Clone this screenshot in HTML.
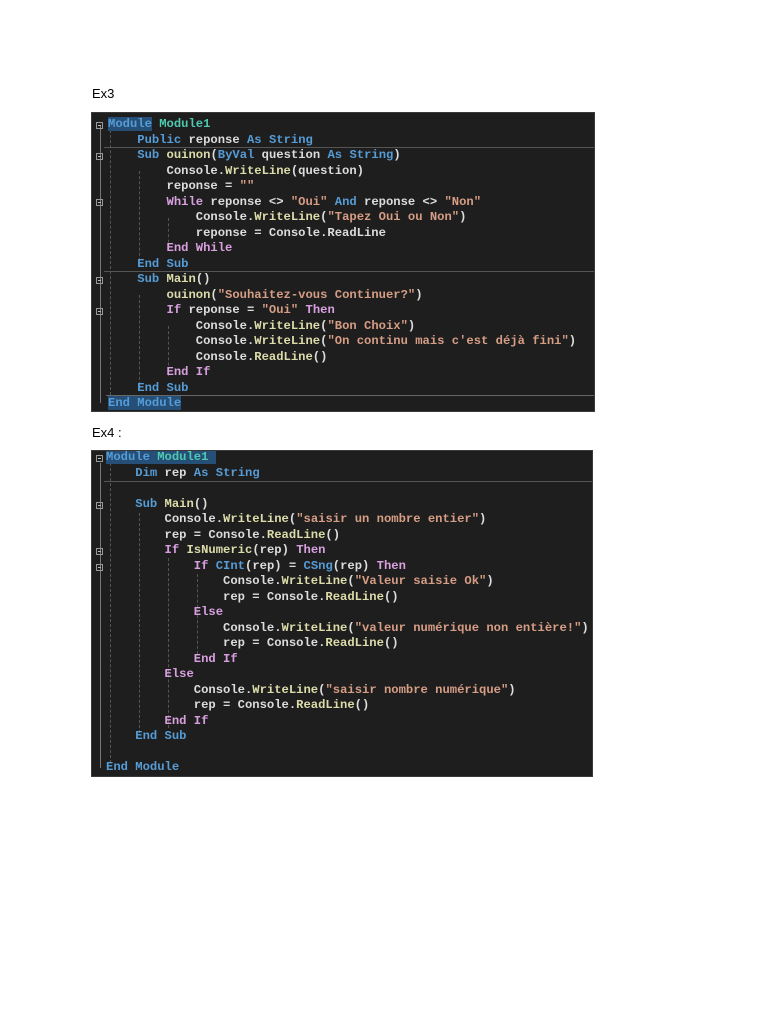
<!DOCTYPE html>
<html><head><meta charset="utf-8"><style>
body{margin:0;width:768px;height:1024px;background:#fff;position:relative;font-family:"Liberation Sans",sans-serif;}
.lbl{position:absolute;font-size:13px;color:#000;}
.box{position:absolute;background:#1e1e1e;border:1px solid #3a3a3a;box-sizing:border-box;overflow:hidden}
.ln{position:absolute;left:0;white-space:pre;font-family:"Liberation Mono",monospace;font-size:12.2px;font-weight:bold;color:#dcdcdc;line-height:15.5px;height:15.5px}
.k{color:#569cd6}.c{color:#d8a0df}.s{color:#d69d85}.t{color:#4ec9b0}.m{color:#dcdcaa}
.hl{background:#264f78}
.fold{position:absolute;left:4px;width:7px;height:7px;border:1px solid #999;box-sizing:border-box}
.fold:after{content:"";position:absolute;left:1px;top:2px;width:3px;height:1px;background:#bbb}
.vl{position:absolute;border-left:1px dashed #555;width:0}
.sep{position:absolute;left:12px;right:0;height:1px;background:#555}
</style></head><body>
<div class="lbl" style="left:92px;top:86px">Ex3</div>
<div class="box" style="left:91px;top:112px;width:504px;height:300px">
<div class="sep" style="top:34px"></div>
<div class="sep" style="top:158px"></div>
<div class="sep" style="top:282px;left:14px;background:#666"></div>
<div class="vl" style="left:8px;top:12px;height:278px;border-left:1px solid #777"></div>
<div class="vl" style="left:18px;top:12px;height:270px"></div>
<div class="vl" style="left:47px;top:58px;height:95px"></div>
<div class="vl" style="left:76px;top:105px;height:30px"></div>
<div class="vl" style="left:47px;top:182px;height:95px"></div>
<div class="vl" style="left:76px;top:213px;height:50px"></div>
<div class="fold" style="top:9px"></div>
<div class="fold" style="top:40px"></div>
<div class="fold" style="top:86px"></div>
<div class="fold" style="top:164px"></div>
<div class="fold" style="top:195px"></div>
<div style="position:absolute;left:16px;top:0">
<div class="ln" style="top:4px"><span class="k hl">Module</span> <span class="t">Module1</span></div>
<div class="ln" style="top:19.5px">    <span class="k">Public</span> reponse <span class="k">As</span> <span class="k">String</span></div>
<div class="ln" style="top:35px">    <span class="k">Sub</span> <span class="m">ouinon</span>(<span class="k">ByVal</span> question <span class="k">As</span> <span class="k">String</span>)</div>
<div class="ln" style="top:50.5px">        Console.<span class="m">WriteLine</span>(question)</div>
<div class="ln" style="top:66px">        reponse = <span class="s">""</span></div>
<div class="ln" style="top:81.5px">        <span class="c">While</span> reponse &lt;&gt; <span class="s">"Oui"</span> <span class="k">And</span> reponse &lt;&gt; <span class="s">"Non"</span></div>
<div class="ln" style="top:97px">            Console.<span class="m">WriteLine</span>(<span class="s">"Tapez Oui ou Non"</span>)</div>
<div class="ln" style="top:112.5px">            reponse = Console.ReadLine</div>
<div class="ln" style="top:128px">        <span class="c">End While</span></div>
<div class="ln" style="top:143.5px">    <span class="k">End Sub</span></div>
<div class="ln" style="top:159px">    <span class="k">Sub</span> <span class="m">Main</span>()</div>
<div class="ln" style="top:174.5px">        <span class="m">ouinon</span>(<span class="s">"Souhaitez-vous Continuer?"</span>)</div>
<div class="ln" style="top:190px">        <span class="c">If</span> reponse = <span class="s">"Oui"</span> <span class="c">Then</span></div>
<div class="ln" style="top:205.5px">            Console.<span class="m">WriteLine</span>(<span class="s">"Bon Choix"</span>)</div>
<div class="ln" style="top:221px">            Console.<span class="m">WriteLine</span>(<span class="s">"On continu mais c'est déjà fini"</span>)</div>
<div class="ln" style="top:236.5px">            Console.<span class="m">ReadLine</span>()</div>
<div class="ln" style="top:252px">        <span class="c">End If</span></div>
<div class="ln" style="top:267.5px">    <span class="k">End Sub</span></div>
<div class="ln" style="top:283px"><span class="k hl">End Module</span></div>
</div></div>

<div class="lbl" style="left:92px;top:425px">Ex4 :</div>
<div class="box" style="left:91px;top:450px;width:502px;height:327px">
<div class="sep" style="top:30px"></div>
<div class="vl" style="left:8px;top:12px;height:305px;border-left:1px solid #777"></div>
<div class="vl" style="left:18px;top:12px;height:300px"></div>
<div class="vl" style="left:47px;top:62px;height:220px"></div>
<div class="vl" style="left:76px;top:107px;height:170px"></div>
<div class="vl" style="left:105px;top:123px;height:80px"></div>
<div class="fold" style="top:4px"></div>
<div class="fold" style="top:51px"></div>
<div class="fold" style="top:97px"></div>
<div class="fold" style="top:113px"></div>
<div style="position:absolute;left:14px;top:0">
<div class="ln" style="top:-1px"><span class="hl"><span class="k">Module</span> <span class="t">Module1</span> </span></div>
<div class="ln" style="top:14.5px">    <span class="k">Dim</span> rep <span class="k">As</span> <span class="k">String</span></div>
<div class="ln" style="top:45.5px">    <span class="k">Sub</span> <span class="m">Main</span>()</div>
<div class="ln" style="top:61px">        Console.<span class="m">WriteLine</span>(<span class="s">"saisir un nombre entier"</span>)</div>
<div class="ln" style="top:76.5px">        rep = Console.<span class="m">ReadLine</span>()</div>
<div class="ln" style="top:92px">        <span class="c">If</span> <span class="m">IsNumeric</span>(rep) <span class="c">Then</span></div>
<div class="ln" style="top:107.5px">            <span class="c">If</span> <span class="k">CInt</span>(rep) = <span class="k">CSng</span>(rep) <span class="c">Then</span></div>
<div class="ln" style="top:123px">                Console.<span class="m">WriteLine</span>(<span class="s">"Valeur saisie Ok"</span>)</div>
<div class="ln" style="top:138.5px">                rep = Console.<span class="m">ReadLine</span>()</div>
<div class="ln" style="top:154px">            <span class="c">Else</span></div>
<div class="ln" style="top:169.5px">                Console.<span class="m">WriteLine</span>(<span class="s">"valeur numérique non entière!"</span>)</div>
<div class="ln" style="top:185px">                rep = Console.<span class="m">ReadLine</span>()</div>
<div class="ln" style="top:200.5px">            <span class="c">End If</span></div>
<div class="ln" style="top:216px">        <span class="c">Else</span></div>
<div class="ln" style="top:231.5px">            Console.<span class="m">WriteLine</span>(<span class="s">"saisir nombre numérique"</span>)</div>
<div class="ln" style="top:247px">            rep = Console.<span class="m">ReadLine</span>()</div>
<div class="ln" style="top:262.5px">        <span class="c">End If</span></div>
<div class="ln" style="top:278px">    <span class="k">End Sub</span></div>
<div class="ln" style="top:309px"><span class="k">End Module</span></div>
</div></div>
</body></html>
